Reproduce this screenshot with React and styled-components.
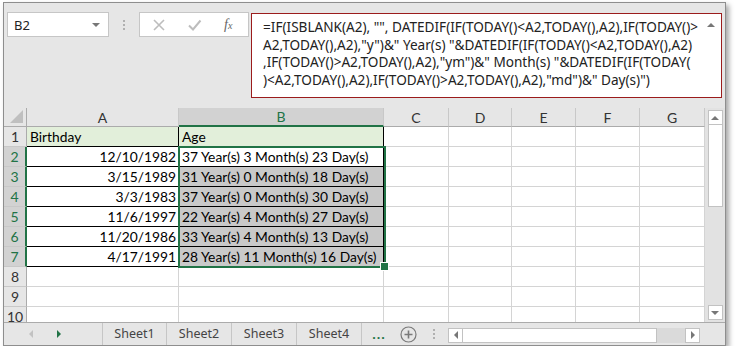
import React from 'react';
import styled, { createGlobalStyle } from 'styled-components';

const GlobalStyle = createGlobalStyle`
  body {
    margin: 0;
    background: #ffffff;
  }
  * {
    box-sizing: border-box;
  }
`;

const GREEN = '#217346';
const CELL_FONT = `Lato, "Liberation Sans", sans-serif`;
const UI_FONT = `"Noto Sans", "Open Sans", sans-serif`;

const Window = styled.div`
  margin: 2px 0 0 3px;
  width: 723px;
  height: 344px;
  border: 1px solid #8e8e8e;
  background: #e6e6e6;
  box-shadow: 3px 3px 5px rgba(0, 0, 0, 0.35);
  display: flex;
  flex-direction: column;
  overflow: hidden;
`;

const FormulaArea = styled.div`
  height: 105px;
  display: flex;
  align-items: flex-start;
  padding: 9px 0 0 3px;
`;

const NameBox = styled.div`
  width: 102px;
  height: 25px;
  background: #fff;
  border: 1px solid #c6c6c6;
  display: flex;
  align-items: center;
  justify-content: space-between;
  padding: 0 8px 0 6px;
  font-family: ${UI_FONT};
  font-size: 13px;
  color: #222;
`;

const Caret = styled.span`
  width: 0;
  height: 0;
  border-left: 4px solid transparent;
  border-right: 4px solid transparent;
  border-top: 4px solid #777;
`;

const Dots = styled.div`
  width: 30px;
  height: 25px;
  display: flex;
  flex-direction: column;
  align-items: center;
  justify-content: center;
  gap: 2px;
  span {
    width: 2px;
    height: 2px;
    background: #b0b0b0;
  }
`;

const FxButtons = styled.div`
  width: 110px;
  height: 25px;
  background: #fff;
  border: 1px solid #c6c6c6;
  display: flex;
  align-items: center;
  padding-left: 12px;
  gap: 21px;
`;

const FxLabel = styled.span`
  font-family: "Liberation Serif", serif;
  font-style: italic;
  font-size: 14px;
  color: #666;
  margin-left: 1px;
  sub {
    font-size: 10px;
    vertical-align: baseline;
  }
`;

const FormulaBar = styled.div`
  margin: 1px 0 0 2px;
  width: 471px;
  height: 85px;
  background: #fff;
  border: 1px solid #9b1c1c;
  position: relative;
  padding: 4px 0 0 11px;
  font-family: ${UI_FONT};
  font-size: 13.6px;
  line-height: 17.6px;
  color: #222;
  white-space: nowrap;
`;

const ScrollUp = styled.span`
  position: absolute;
  right: 6px;
  top: 9px;
  width: 0;
  height: 0;
  border-left: 4px solid transparent;
  border-right: 4px solid transparent;
  border-bottom: 4px solid #777;
`;

const GridArea = styled.div`
  display: flex;
  height: 214px;
`;

const Sheet = styled.div`
  width: 701px;
  height: 214px;
  position: relative;
  overflow: hidden;
  background: #fff;
  display: grid;
  grid-template-columns: 23px 152px 205px 65px 63px 64px 64px 65px;
  grid-auto-rows: 20px;
  grid-template-rows: 19px;
  align-content: start;
`;

const Corner = styled.div`
  background: #e6e6e6;
  border-right: 1px solid #ababab;
  border-bottom: 1px solid #ababab;
  position: relative;
  &::after {
    content: '';
    position: absolute;
    right: 3px;
    bottom: 3px;
    border-left: 13px solid transparent;
    border-bottom: 13px solid #bfbfbf;
  }
`;

const ColHead = styled.div`
  background: ${(p) => (p.$active ? '#d2d2d2' : '#e6e6e6')};
  color: ${(p) => (p.$active ? GREEN : '#333')};
  border-right: 1px solid #c8c8c8;
  border-bottom: ${(p) => (p.$active ? `2px solid ${GREEN}` : '1px solid #ababab')};
  display: flex;
  align-items: center;
  justify-content: center;
  font-family: ${CELL_FONT};
  font-size: 14px;
`;

const RowHead = styled.div`
  background: ${(p) => (p.$active ? '#d2d2d2' : '#e6e6e6')};
  color: ${(p) => (p.$active ? GREEN : '#333')};
  border-right: ${(p) => (p.$active ? `2px solid ${GREEN}` : '1px solid #ababab')};
  border-bottom: 1px solid #c8c8c8;
  display: flex;
  align-items: flex-end;
  justify-content: center;
  padding-bottom: 1px;
  font-family: ${CELL_FONT};
  font-size: 14px;
`;

const Cell = styled.div`
  background: ${(p) => p.$bg || '#fff'};
  border-right: 1px solid ${(p) => (p.$boxed ? '#000' : '#d4d4d4')};
  border-bottom: 1px solid ${(p) => (p.$boxed ? '#000' : '#d4d4d4')};
  display: flex;
  align-items: flex-end;
  justify-content: ${(p) => (p.$right ? 'flex-end' : 'flex-start')};
  padding: 0 2px 1px 3px;
  font-family: ${CELL_FONT};
  font-size: 13.8px;
  color: #000;
  white-space: nowrap;
  overflow: visible;
`;

const Selection = styled.div`
  position: absolute;
  left: 174px;
  top: 38px;
  width: 208px;
  height: 122px;
  border: 2px solid ${GREEN};
  pointer-events: none;
  &::after {
    content: '';
    position: absolute;
    right: -5px;
    bottom: -5px;
    width: 7px;
    height: 7px;
    background: ${GREEN};
    border: 1px solid #fff;
  }
`;

const VScroll = styled.div`
  width: 20px;
  background: #e2e2e2;
  display: flex;
  flex-direction: column;
  align-items: center;
  padding: 2px 0 0 0;
`;

const ScrollBtn = styled.div`
  width: 15px;
  height: 15px;
  background: #fff;
  border: 1px solid #c2c2c2;
  display: flex;
  align-items: center;
  justify-content: center;
  margin-top: ${(p) => p.$push || 0};
`;

const Arrow = styled.span`
  width: 0;
  height: 0;
  ${(p) => p.$dir === 'up' && `border-left: 4px solid transparent; border-right: 4px solid transparent; border-bottom: 4px solid #777;`}
  ${(p) => p.$dir === 'down' && `border-left: 4px solid transparent; border-right: 4px solid transparent; border-top: 4px solid #777;`}
  ${(p) => p.$dir === 'left' && `border-top: 4px solid transparent; border-bottom: 4px solid transparent; border-right: 4px solid ${p.$color || '#777'};`}
  ${(p) => p.$dir === 'right' && `border-top: 4px solid transparent; border-bottom: 4px solid transparent; border-left: 4px solid ${p.$color || '#777'};`}
`;

const VThumb = styled.div`
  width: 15px;
  height: 82px;
  background: #fff;
  border: 1px solid #c2c2c2;
  border-top: none;
`;

const TabBar = styled.div`
  flex: 1;
  display: flex;
  align-items: stretch;
  border-top: 1px solid #ababab;
  font-family: ${UI_FONT};
  font-size: 12.5px;
  color: #444;
`;

const TabNav = styled.div`
  width: 98px;
  display: flex;
  align-items: center;
  padding-left: 25px;
  gap: 24px;
`;

const Tab = styled.div`
  width: 65px;
  display: flex;
  align-items: center;
  justify-content: center;
  border-left: ${(p) => (p.$first ? '1px solid #c6c6c6' : 'none')};
  border-right: 1px solid #c6c6c6;
  padding-bottom: 1px;
`;

const More = styled.div`
  width: 34px;
  display: flex;
  align-items: center;
  justify-content: center;
  color: ${GREEN};
  font-weight: bold;
  letter-spacing: 1px;
`;

const AddSheet = styled.div`
  width: 24px;
  display: flex;
  align-items: center;
  justify-content: center;
`;

const SmallDots = styled(Dots)`
  height: auto;
  width: 28px;
  align-self: center;
`;

const HScroll = styled.div`
  width: 252px;
  height: 15px;
  align-self: center;
  margin-top: 2px;
  display: flex;
  background: #dadada;
`;

const HBtn = styled.div`
  width: 15px;
  height: 15px;
  background: #fff;
  border: 1px solid #c2c2c2;
  display: flex;
  align-items: center;
  justify-content: center;
  margin-left: ${(p) => p.$push || 0};
`;

const HThumb = styled.div`
  width: 194px;
  height: 15px;
  background: #fff;
  border: 1px solid #c2c2c2;
  border-left: none;
`;

const cols = ['A', 'B', 'C', 'D', 'E', 'F', 'G'];

const data = [
  ['12/10/1982', '37 Year(s) 3 Month(s) 23 Day(s)'],
  ['3/15/1989', '31 Year(s) 0 Month(s) 18 Day(s)'],
  ['3/3/1983', '37 Year(s) 0 Month(s) 30 Day(s)'],
  ['11/6/1997', '22 Year(s) 4 Month(s) 27 Day(s)'],
  ['11/20/1986', '33 Year(s) 4 Month(s) 13 Day(s)'],
  ['4/17/1991', '28 Year(s) 11 Month(s) 16 Day(s)'],
];

const formula = [
  '=IF(ISBLANK(A2), "", DATEDIF(IF(TODAY()<A2,TODAY(),A2),IF(TODAY()>',
  'A2,TODAY(),A2),"y")&" Year(s) "&DATEDIF(IF(TODAY()<A2,TODAY(),A2)',
  ',IF(TODAY()>A2,TODAY(),A2),"ym")&" Month(s) "&DATEDIF(IF(TODAY(',
  ')<A2,TODAY(),A2),IF(TODAY()>A2,TODAY(),A2),"md")&" Day(s)")',
];

function EmptyCells() {
  return cols.slice(2).map((c) => <Cell key={c} />);
}

function App() {
  const rows = [];
  rows.push(
    <React.Fragment key="r1">
      <RowHead>1</RowHead>
      <Cell $boxed $bg="#e2efda">Birthday</Cell>
      <Cell $boxed $bg="#e2efda">Age</Cell>
      <EmptyCells />
    </React.Fragment>
  );
  data.forEach(([birth, age], i) => {
    rows.push(
      <React.Fragment key={'r' + (i + 2)}>
        <RowHead $active>{i + 2}</RowHead>
        <Cell $boxed $right>{birth}</Cell>
        <Cell $boxed $bg={i === 0 ? '#fff' : '#c9c9c9'}>{age}</Cell>
        <EmptyCells />
      </React.Fragment>
    );
  });
  [8, 9, 10].forEach((n) => {
    rows.push(
      <React.Fragment key={'r' + n}>
        <RowHead>{n}</RowHead>
        <Cell />
        <Cell />
        <EmptyCells />
      </React.Fragment>
    );
  });

  return (
    <>
      <GlobalStyle />
      <Window>
        <FormulaArea>
          <NameBox>
            B2
            <Caret />
          </NameBox>
          <Dots>
            <span />
            <span />
            <span />
          </Dots>
          <FxButtons>
            <svg width="14" height="14" viewBox="0 0 14 14">
              <path d="M2 2 L12 12 M12 2 L2 12" stroke="#bdbdbd" strokeWidth="1.6" fill="none" />
            </svg>
            <svg width="15" height="14" viewBox="0 0 15 14">
              <path d="M2 7.5 L6 11.5 L13.5 2.5" stroke="#bdbdbd" strokeWidth="2" fill="none" />
            </svg>
            <FxLabel>
              f<sub>x</sub>
            </FxLabel>
          </FxButtons>
          <FormulaBar>
            {formula.map((line) => (
              <div key={line}>{line}</div>
            ))}
            <ScrollUp />
          </FormulaBar>
        </FormulaArea>
        <GridArea>
          <Sheet>
            <Corner />
            {cols.map((c) => (
              <ColHead key={c} $active={c === 'B'}>
                {c}
              </ColHead>
            ))}
            {rows}
            <Selection />
          </Sheet>
          <VScroll>
            <ScrollBtn>
              <Arrow $dir="up" />
            </ScrollBtn>
            <VThumb />
            <ScrollBtn $push="98px">
              <Arrow $dir="down" />
            </ScrollBtn>
          </VScroll>
        </GridArea>
        <TabBar>
          <TabNav>
            <Arrow $dir="left" $color="#c2c2c2" />
            <Arrow $dir="right" $color={GREEN} />
          </TabNav>
          {['Sheet1', 'Sheet2', 'Sheet3', 'Sheet4'].map((s, i) => (
            <Tab key={s} $first={i === 0}>
              {s}
            </Tab>
          ))}
          <More>...</More>
          <AddSheet>
            <svg width="17" height="17" viewBox="0 0 17 17">
              <circle cx="8.5" cy="8.5" r="7.5" stroke="#7a7a7a" strokeWidth="1.2" fill="none" />
              <path d="M8.5 4.5 V12.5 M4.5 8.5 H12.5" stroke="#7a7a7a" strokeWidth="1.6" />
            </svg>
          </AddSheet>
          <SmallDots>
            <span />
            <span />
            <span />
          </SmallDots>
          <HScroll>
            <HBtn>
              <Arrow $dir="left" />
            </HBtn>
            <HThumb />
            <HBtn $push="28px">
              <Arrow $dir="right" />
            </HBtn>
          </HScroll>
        </TabBar>
      </Window>
    </>
  );
}

export default App;
